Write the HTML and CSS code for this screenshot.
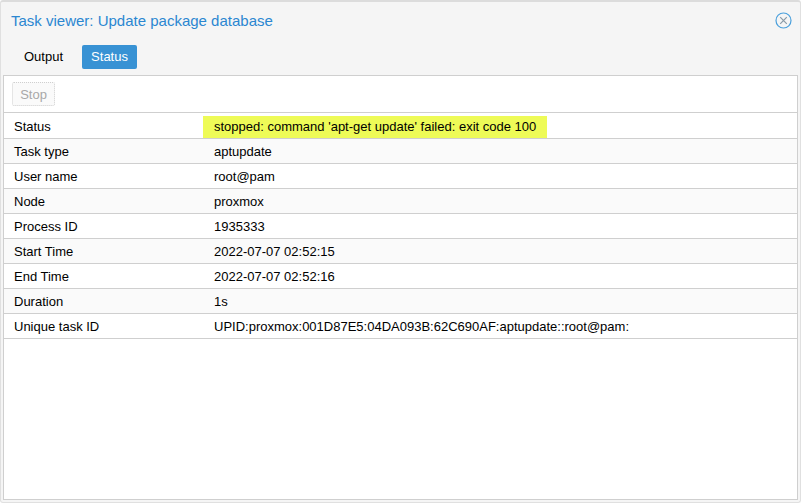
FILE: index.html
```html
<!DOCTYPE html>
<html lang="en">
<head>
  <meta charset="UTF-8" />
  <title>Task viewer</title>
  <link rel="stylesheet" href="styles.css">
</head>
<body>

<div class="window">
  <div class="window-header">
    <div class="window-title">Task viewer: Update package database</div>
    <svg class="close-icon" width="17" height="17" viewBox="0 0 17 17">
      <circle cx="8.5" cy="8.5" r="7.5" fill="none" stroke="#4ba0dc" stroke-width="1.2"/>
      <path d="M5.2 5.2 L11.8 11.8 M11.8 5.2 L5.2 11.8" stroke="#8a9aa6" stroke-width="1.2"/>
    </svg>
  </div>

  <div class="tabs">
    <div class="tab">Output</div>
    <div class="tab active">Status</div>
  </div>

  <div class="tab-body">
    <div class="toolbar">
      <button class="stop-btn" disabled>Stop</button>
    </div>

    <div class="grid-row first">
      <div class="key">Status</div>
      <div class="value"><span class="highlight">stopped: command 'apt-get update' failed: exit code 100</span></div>
    </div>
    <div class="grid-row alt">
      <div class="key">Task type</div>
      <div class="value">aptupdate</div>
    </div>
    <div class="grid-row">
      <div class="key">User name</div>
      <div class="value">root@pam</div>
    </div>
    <div class="grid-row alt">
      <div class="key">Node</div>
      <div class="value">proxmox</div>
    </div>
    <div class="grid-row">
      <div class="key">Process ID</div>
      <div class="value">1935333</div>
    </div>
    <div class="grid-row alt">
      <div class="key">Start Time</div>
      <div class="value">2022-07-07 02:52:15</div>
    </div>
    <div class="grid-row">
      <div class="key">End Time</div>
      <div class="value">2022-07-07 02:52:16</div>
    </div>
    <div class="grid-row alt">
      <div class="key">Duration</div>
      <div class="value">1s</div>
    </div>
    <div class="grid-row">
      <div class="key">Unique task ID</div>
      <div class="value">UPID:proxmox:001D87E5:04DA093B:62C690AF:aptupdate::root@pam:</div>
    </div>
  </div>
</div>

</body>
</html>
```

FILE: styles.css
```css
body {
  margin: 0;
  font-family: "Liberation Sans", Arial, sans-serif;
  font-size: 13px;
  color: #000;
  background: #fff;
}

.window {
  box-sizing: border-box;
  height: 503px;
  display: flex;
  flex-direction: column;
  padding: 0 2px 2px 2px;
  background: #f5f5f5;
  border: 1px solid #e0e0e0;
  border-top: 2px solid #dcdcdc;
  border-radius: 3px;
}

.window-header {
  display: flex;
  justify-content: space-between;
  align-items: center;
  height: 37px;
  padding: 0 6px 0 8px;
}

.window-title {
  font-size: 15px;
  color: #2b87d1;
}

.close-icon {
  display: block;
}

.tabs {
  display: flex;
  gap: 9px;
  height: 36px;
  padding: 6px 0 0 11px;
  box-sizing: border-box;
}

.tab {
  height: 24px;
  line-height: 24px;
  padding: 0 10px;
  border-radius: 2px;
}

.tab.active {
  width: 55px;
  padding: 0;
  text-align: center;
  background: #3892d4;
  color: #fff;
}

.tab-body {
  flex: 1;
  background: #fff;
  border: 1px solid #cfcfcf;
}

.toolbar {
  box-sizing: border-box;
  height: 37px;
  padding: 6px 8px;
  border-bottom: 1px solid #cfcfcf;
}

.stop-btn {
  display: block;
  box-sizing: border-box;
  width: 43px;
  height: 24px;
  padding: 0;
  font-family: inherit;
  font-size: 13px;
  color: #a8a8a8;
  background: #fafafa;
  border: 1px dotted #cfcfcf;
  border-radius: 2px;
}

.grid-row {
  display: flex;
  box-sizing: border-box;
  height: 25px;
  line-height: 26px;
  border-bottom: 1px solid #cfcfcf;
}

.grid-row.first {
  height: 26px;
  line-height: 28px;
}

.grid-row.alt {
  background: #fafafa;
}

.key {
  width: 210px;
  padding-left: 10px;
  box-sizing: border-box;
  flex-shrink: 0;
}

.first .key {
  width: 199px;
}

.highlight {
  display: block;
  height: 22px;
  margin-top: 3px;
  padding: 0 11px;
  line-height: 22px;
  background: #eefb57;
}
```
